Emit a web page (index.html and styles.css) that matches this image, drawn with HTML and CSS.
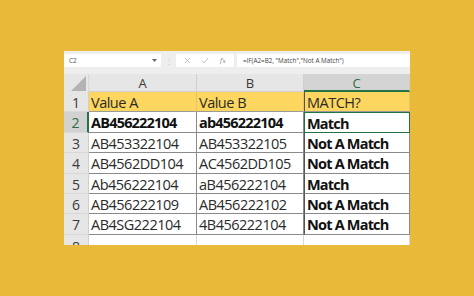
FILE: index.html
```html
<!DOCTYPE html>
<html>
<head>
<meta charset="utf-8">
<link rel="stylesheet" href="styles.css">
</head>
<body>
<div class="sheet">
  <div class="toolbar">
    <div class="namebox"><span>C2</span><svg class="dd" width="5" height="3" viewBox="0 0 5 3"><path d="M0 0h5L2.5 3z" fill="#666"/></svg></div>
    <div class="dots">⋮</div>
    <div class="fxbtns">
      <svg width="7" height="7" viewBox="0 0 7 7"><path d="M1 1l5 5M6 1L1 6" stroke="#bbb" stroke-width="0.9"/></svg>
      <svg width="8" height="7" viewBox="0 0 8 7"><path d="M1 4l2 2 4-5" stroke="#bbb" stroke-width="0.9" fill="none"/></svg>
      <span class="fx">fx</span>
    </div>
    <div class="formula">=IF(A2=B2, "Match","Not A Match")</div>
  </div>
  <div class="grid">
    <div class="corner"><div class="tri"></div></div>
    <div class="colh">A</div>
    <div class="colh">B</div>
    <div class="colh sel">C</div>

    <div class="rowh">1</div>
    <div class="cell hdr">Value A</div>
    <div class="cell hdr">Value B</div>
    <div class="cell hdr c">MATCH?</div>

    <div class="rowh selr">2</div>
    <div class="cell b">AB456222104</div>
    <div class="cell b">ab456222104</div>
    <div class="cell b c active">Match</div>

    <div class="rowh">3</div>
    <div class="cell">AB453322104</div>
    <div class="cell">AB453322105</div>
    <div class="cell b c">Not A Match</div>

    <div class="rowh">4</div>
    <div class="cell">AB4562DD104</div>
    <div class="cell">AC4562DD105</div>
    <div class="cell b c">Not A Match</div>

    <div class="rowh">5</div>
    <div class="cell">Ab456222104</div>
    <div class="cell">aB456222104</div>
    <div class="cell b c">Match</div>

    <div class="rowh">6</div>
    <div class="cell">AB456222109</div>
    <div class="cell">AB456222102</div>
    <div class="cell b c">Not A Match</div>

    <div class="rowh">7</div>
    <div class="cell">AB4SG222104</div>
    <div class="cell">4B456222104</div>
    <div class="cell b c">Not A Match</div>

    <div class="rowh last">8</div>
    <div class="cell empty"></div>
    <div class="cell empty"></div>
    <div class="cell empty"></div>
  </div>
</div>
</body>
</html>
```

FILE: styles.css
```css
html, body {
  margin: 0;
  padding: 0;
  width: 474px;
  height: 296px;
  background: #e9b93a;
  overflow: hidden;
  font-family: "Open Sans", "Liberation Sans", sans-serif;
}
.sheet {
  margin: 51px 0 0 64px;
  width: 346px;
  height: 194px;
  background: #e8e8e8;
  overflow: hidden;
  display: flex;
  flex-direction: column;
}
.toolbar {
  height: 23px;
  flex: none;
  background: #eeeeee;
  display: flex;
  align-items: flex-start;
  padding-top: 3px;
  box-sizing: border-box;
}
.namebox {
  width: 97px;
  height: 13px;
  background: #fff;
  display: flex;
  align-items: center;
  justify-content: space-between;
  padding: 0 4px 0 5px;
  box-sizing: border-box;
  font-size: 6.5px;
  color: #555;
}
.dots {
  width: 15px;
  text-align: center;
  font-size: 8px;
  line-height: 13px;
  color: #c4c4c4;
}
.fxbtns {
  width: 58px;
  height: 13px;
  background: #fff;
  display: flex;
  align-items: center;
  justify-content: space-around;
  padding: 0 3px;
  box-sizing: border-box;
}
.fx {
  font-family: "DejaVu Serif", serif;
  font-style: italic;
  font-size: 6.5px;
  color: #888;
}
.formula {
  margin-left: 3px;
  flex: 1;
  height: 13px;
  background: #fff;
  font-size: 6.3px;
  line-height: 13px;
  color: #444;
  padding-left: 6px;
}
.grid {
  display: grid;
  grid-template-columns: 25px 108px 107px 106px;
  grid-template-rows: 18px repeat(7, 20.4px) 12px;
  background: #fff;
}
.corner {
  background: #e6e6e6;
  border-right: 1px solid #d8d8d8;
  position: relative;
}
.tri {
  position: absolute;
  right: 2px;
  bottom: 1px;
  width: 0;
  height: 0;
  border-left: 15px solid transparent;
  border-bottom: 15px solid #b3b3b3;
}
.colh {
  background: #e6e6e6;
  border-right: 1px solid #cfcfcf;
  border-bottom: 1px solid #cfcfcf;
  text-align: center;
  font-size: 13px;
  line-height: 19px;
  color: #3a3a3a;
}
.colh.sel {
  background: #d4d4d4;
  border-bottom: 2px solid #217346;
  color: #2e6b46;
}
.rowh {
  background: #e6e6e6;
  border-right: 1px solid #cfcfcf;
  border-bottom: 1px solid #d8d8d8;
  text-align: center;
  font-size: 14px;
  line-height: 21px;
  color: #3a3a3a;
}
.rowh.selr {
  background: #d2d2d2;
  color: #2e6b46;
  border-right: 2px solid #217346;
}
.rowh.last {
  line-height: 24px;
}
.cell {
  border-right: 1px solid #8a8a8a;
  border-bottom: 1px solid #8a8a8a;
  font-size: 14.5px;
  letter-spacing: -0.5px;
  line-height: 20px;
  padding-top: 1px;
  color: #2a2a2a;
  padding-left: 2px;
  white-space: nowrap;
  overflow: hidden;
  box-sizing: border-box;
}
.cell.hdr {
  background: #fcd65e;
  color: #2a2a2a;
  border-right: 1px solid #e4c270;
  border-bottom: 1px solid #9a9a9a;
}
.cell.c {
  border-left: 1px solid #555;
}
.cell.b {
  font-weight: 700;
  letter-spacing: -0.8px;
  color: #111;
}
.cell.active {
  border: 1px solid #217346;
}
.cell.empty {
  border-bottom: none;
  border-right: 1px solid #d8d8d8;
}
```
